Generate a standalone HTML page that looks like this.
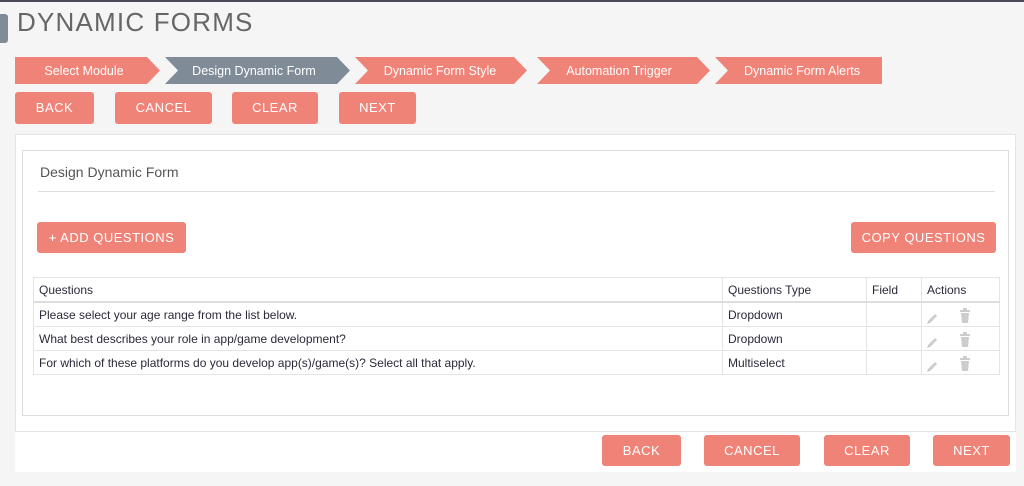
<!DOCTYPE html>
<html><head><style>
body{margin:0;width:1024px;height:486px;background:#f5f5f5;font-family:"Liberation Sans",sans-serif;position:relative;overflow:hidden;color:#555}
.a{position:absolute}
.btn{position:absolute;background:#f08377;color:#fff;font-size:13px;letter-spacing:.5px;text-align:center;border-radius:3px;box-sizing:border-box}
table{border-collapse:collapse;font-size:12px;color:#2a2a3a}
td,th{border:1px solid #e4e4e4;padding:0 5px;height:23px;text-align:left;font-weight:normal}
th{border-bottom:2px solid #ddd}
</style></head><body>
<div class="a" style="left:0;top:0;width:1024px;height:2px;background:#4a4a5a"></div>
<div class="a" style="left:0;top:14px;width:8px;height:29px;background:#7f8c97;border-radius:0 3px 3px 0"></div>
<div class="a" style="left:17px;top:7px;font-size:26px;letter-spacing:1.2px;color:#666">DYNAMIC FORMS</div>
<svg class="a" style="left:0;top:0" width="1024" height="90">
<polygon points="15,57 147,57 160,70.5 147,84 15,84" fill="#f08377"/>
<polygon points="165,57 337,57 350,70.5 337,84 165,84 178,70.5" fill="#7f8c97"/>
<polygon points="355,57 514,57 527,70.5 514,84 355,84 368,70.5" fill="#f08377"/>
<polygon points="537,57 697,57 710,70.5 697,84 537,84 550,70.5" fill="#f08377"/>
<polygon points="715,57 882,57 882,84 715,84 728,70.5" fill="#f08377"/>
<g fill="#fff" font-size="12.5" font-family="Liberation Sans,sans-serif" text-anchor="middle">
<text x="84" y="75">Select Module</text><text x="254" y="75">Design Dynamic Form</text>
<text x="440" y="75">Dynamic Form Style</text><text x="619" y="75">Automation Trigger</text>
<text x="802" y="75">Dynamic Form Alerts</text></g></svg>
<div class="btn" style="left:15px;top:92px;width:79px;height:32px;line-height:32px">BACK</div>
<div class="btn" style="left:115px;top:92px;width:97px;height:32px;line-height:32px">CANCEL</div>
<div class="btn" style="left:232px;top:92px;width:86px;height:32px;line-height:32px">CLEAR</div>
<div class="btn" style="left:339px;top:92px;width:77px;height:32px;line-height:32px">NEXT</div>
<div class="a" style="left:15px;top:134px;width:1001px;height:298px;background:#fff;border:1px solid #e4e4e4;box-sizing:border-box"></div>
<div class="a" style="left:22px;top:150px;width:987px;height:266px;border:1px solid #ddd;box-sizing:border-box"></div>
<div class="a" style="left:40px;top:164px;font-size:14px;color:#555">Design Dynamic Form</div>
<div class="a" style="left:38px;top:191px;width:957px;height:1px;background:#ddd"></div>
<div class="btn" style="left:37px;top:222px;width:149px;height:31px;line-height:31px">+ ADD QUESTIONS</div>
<div class="btn" style="left:851px;top:222px;width:145px;height:31px;line-height:31px">COPY QUESTIONS</div>
<table class="a" style="left:33px;top:277px;width:967px">
<tr><th style="width:678px">Questions</th><th style="width:133px">Questions Type</th><th style="width:44px">Field</th><th>Actions</th></tr>
<tr><td>Please select your age range from the list below.</td><td>Dropdown</td><td></td><td class="ic"></td></tr>
<tr><td>What best describes your role in app/game development?</td><td>Dropdown</td><td></td><td class="ic"></td></tr>
<tr><td>For which of these platforms do you develop app(s)/game(s)? Select all that apply.</td><td>Multiselect</td><td></td><td class="ic"></td></tr>
</table>
<svg class="a" style="left:920px;top:302px" width="60" height="72" fill="#ccc">
<g id="r"><path d="M8 19 L15 12 L17 14 L10 21 L7 22 Z"/><rect x="40" y="8" width="10" height="2"/><rect x="43" y="6" width="4" height="2"/><path d="M41 11 H49 L48 21 H42 Z"/></g>
<use href="#r" y="24"/><use href="#r" y="48"/></svg>
<div class="a" style="left:15px;top:432px;width:1001px;height:40px;background:#fff"></div>
<div class="btn" style="left:602px;top:435px;width:79px;height:31px;line-height:31px">BACK</div>
<div class="btn" style="left:704px;top:435px;width:96px;height:31px;line-height:31px">CANCEL</div>
<div class="btn" style="left:824px;top:435px;width:86px;height:31px;line-height:31px">CLEAR</div>
<div class="btn" style="left:933px;top:435px;width:77px;height:31px;line-height:31px">NEXT</div>
</body></html>
